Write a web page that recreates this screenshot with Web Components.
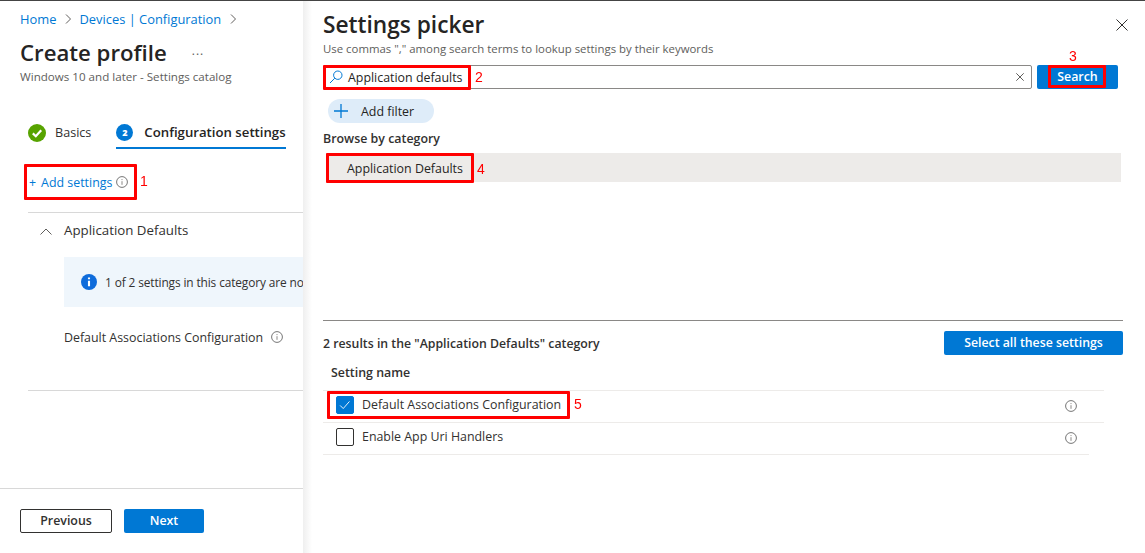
<!DOCTYPE html>
<html lang="en">
<head>
<meta charset="utf-8">
<title>Create profile</title>
<style>
  html, body { margin: 0; height: 100%; background: #fff; }
  body { font-family: "Open Sans", "Liberation Sans", sans-serif; font-size: 12.4px; color: #323130; overflow: hidden; }
</style>
</head>
<body>
<portal-page>
  <profile-pane slot="left"></profile-pane>
  <picker-pane slot="right"></picker-pane>
  <red-mark slot="marks" n="1" style="left:24px;top:164px;width:113px;height:36px" nx="140" ny="172"></red-mark>
  <red-mark slot="marks" n="2" style="left:323px;top:65px;width:148px;height:25px" nx="475" ny="68"></red-mark>
  <red-mark slot="marks" n="3" style="left:1048px;top:65px;width:58px;height:23px" nx="1069" ny="47"></red-mark>
  <red-mark slot="marks" n="4" style="left:326px;top:153px;width:148px;height:30px" nx="477" ny="160"></red-mark>
  <red-mark slot="marks" n="5" style="left:327px;top:391px;width:243px;height:28px" nx="574" ny="395"></red-mark>
</portal-page>

<script>
'use strict';

(function() {
  // small helper, every element below is the same boilerplate
  function define(name, html) {
    customElements.define(name, class extends HTMLElement {
      constructor() {
        super();
        const shadow = this.attachShadow({ mode: 'open' });
        shadow.innerHTML = typeof html === 'function' ? html(this) : html;
      }
    });
  }

  define('portal-page', `
    <style>
      :host { display: block; position: relative; width: 1145px; height: 553px; overflow: hidden; border-top: 1px solid #444; box-sizing: border-box; }
      .panes { display: flex; height: 100%; }
      .left { display: block; flex: 0 0 303px; min-width: 0; overflow: hidden; }
      .right { display: block; flex: 1; min-width: 0; }
    </style>
    <div class="panes">
      <slot name="left" class="left"></slot>
      <slot name="right" class="right"></slot>
    </div>
    <slot name="marks"></slot>
  `);

  // red annotation box with its number, lies over the screenshot
  define('red-mark', el => `
    <style>
      :host { display: block; position: absolute; box-sizing: border-box; border: 3px solid #f00; border-radius: 1px; margin-top: -1px; }
      span { position: fixed; color: #f00; font: 14px "Liberation Sans", sans-serif; line-height: 18px; }
    </style>
    <span style="left:${el.getAttribute('nx')}px;top:${el.getAttribute('ny')}px">${el.getAttribute('n')}</span>
  `);

  define('info-icon', `
    <style>
      :host { display: inline-flex; width: 12px; height: 12px; flex: none; }
      svg { width: 100%; height: 100%; }
    </style>
    <svg viewBox="0 0 12 12" fill="none" stroke="#757575" stroke-width="1">
      <circle cx="6" cy="6" r="5.4"/>
      <path d="M6 5.2v3.6M6 3.1v1" stroke="#8a8886"/>
    </svg>
  `);

  define('blue-button', `
    <style>
      :host { display: inline-flex; align-items: center; justify-content: center; box-sizing: border-box; height: 24px; padding-bottom: 2px; background: #0078d4; color: #fff; font-weight: 600; border-radius: 2px; }
    </style>
    <slot></slot>
  `);

  define('profile-pane', `
    <style>
      :host { display: flex; flex-direction: column; height: 552px; box-sizing: border-box; padding-top: 9px; position: relative; }
      a { color: #0078d4; text-decoration: none; }
      .crumbs { display: flex; align-items: center; height: 18px; margin-left: 20px; font-size: 12.9px; color: #0078d4; }
      .crumbs svg { width: 8px; height: 10px; margin: 0 7.5px; }
      .title { display: flex; align-items: center; margin: 10px 0 0 20px; height: 30px; }
      h1 { margin: 0; font-size: 22.2px; font-weight: 600; color: #252423; line-height: 30px; }
      .more { margin-left: 25px; color: #605e5c; font-size: 12px; letter-spacing: 1px; position: relative; top: -3px; }
      .sub { margin: 1px 0 0 20px; font-size: 11.6px; color: #605e5c; line-height: 16px; }
      .tabs { display: flex; margin: 32px 0 0 28px; height: 35px; }
      .tab { display: flex; align-items: center; gap: 9px; height: 31px; box-sizing: border-box; font-size: 12.6px; }
      .tab.on { margin-left: 25px; gap: 11px; font-size: 13.2px; font-weight: 600; color: #252423; border-bottom: 2px solid #0078d4; height: 32px; }
      .tab.on b { width: 17px; height: 17px; border-radius: 50%; background: #0078d4; color: #fff; font-size: 9px; display: flex; align-items: center; justify-content: center; }
      .tab svg { width: 18px; height: 18px; }
      .add { display: flex; align-items: center; gap: 4px; margin: 15px 0 0 29px; height: 30px; color: #0078d4; }
      .add a span { margin-left: 5px; }
      .group { margin: 15px 0 0 28px; border-top: 1px solid #d8d8d8; border-bottom: 1px solid #d8d8d8; height: 177px; }
      .head { display: flex; align-items: center; height: 34px; font-size: 13.3px; }
      .head svg { width: 12px; height: 7px; margin: 2px 12px 0 12px; }
      .notice { display: flex; align-items: center; gap: 8px; margin: 10px 0 0 36px; height: 50px; padding-left: 17px; background: #eff6fc; white-space: nowrap; overflow: hidden; }
      .notice svg { width: 16px; height: 16px; flex: none; }
      .notice span { font-size: 11.9px; letter-spacing: -.12px; }
      .setting { display: flex; align-items: center; gap: 8px; margin: 20px 0 0 36px; height: 20px; }
      .foot { position: relative; margin-top: auto; border-top: 1px solid #d8d8d8; height: 65px; display: flex; align-items: flex-start; gap: 12px; padding: 20px 0 0 20px; box-sizing: border-box; }
      .prev { display: inline-flex; align-items: center; justify-content: center; box-sizing: border-box; width: 92px; height: 24px; padding-bottom: 2px; border: 1px solid #323130; border-radius: 2px; font-weight: 600; }
      blue-button { width: 80px; }
    </style>
    <div class="crumbs">
      <a>Home</a>
      <svg viewBox="0 0 8 10" fill="none" stroke="#605e5c"><path d="M2 .5 6.5 5 2 9.5"/></svg>
      <a>Devices | Configuration</a>
      <svg viewBox="0 0 8 10" fill="none" stroke="#605e5c"><path d="M2 .5 6.5 5 2 9.5"/></svg>
    </div>
    <div class="title"><h1>Create profile</h1><span class="more">...</span></div>
    <div class="sub">Windows 10 and later - Settings catalog</div>
    <div class="tabs">
      <div class="tab">
        <svg viewBox="0 0 18 18"><circle cx="9" cy="9" r="9" fill="#57a300"/><path d="M4.8 9.4 7.8 12.2 13.2 6.2" fill="none" stroke="#fff" stroke-width="2.2"/></svg>
        <span>Basics</span>
      </div>
      <div class="tab on"><b>2</b><span>Configuration settings</span></div>
    </div>
    <div class="add"><a>+<span>Add settings</span></a><info-icon></info-icon></div>
    <div class="group">
      <div class="head">
        <svg viewBox="0 0 12 7" fill="none" stroke="#605e5c"><path d="M.5 6.5 6 1l5.5 5.5"/></svg>
        <span>Application Defaults</span>
      </div>
      <div class="notice">
        <svg viewBox="0 0 16 16"><circle cx="8" cy="8" r="8" fill="#0f6cdb"/><path d="M8 6.8v5.4M8 3.4v1.9" stroke="#fff" stroke-width="2.1" fill="none"/></svg>
        <span>1 of 2 settings in this category are not configured</span>
      </div>
      <div class="setting"><span>Default Associations Configuration</span><info-icon></info-icon></div>
    </div>
    <div class="foot">
      <span class="prev">Previous</span>
      <blue-button>Next</blue-button>
    </div>
  `);

  define('result-row', el => `
    <style>
      :host { display: flex; align-items: center; height: 32px; box-sizing: border-box; border-bottom: 1px solid #edebe9; padding: 0 0 3px 13px; }
      .box { width: 18px; height: 18px; box-sizing: border-box; border: 1px solid #323130; border-radius: 2px; flex: none; margin-right: 8px; display: flex; }
      :host([checked]) .box { background: #0078d4; border-color: #0078d4; }
      .box svg { width: 100%; height: 100%; }
      .name { flex: 1; margin-bottom: 2px; }
      info-icon { margin: 1px 12px 0 0; }
      :host([checked]) info-icon { margin-right: 27px; }
    </style>
    <span class="box">${el.hasAttribute('checked') ? '<svg viewBox="0 0 18 18" fill="none" stroke="#fff"><path d="M3.5 9.5 7 13 14 5"/></svg>' : ''}</span>
    <span class="name"><slot></slot></span>
    <info-icon></info-icon>
  `);

  define('picker-pane', `
    <style>
      :host { display: block; position: relative; height: 552px; background: linear-gradient(90deg, #efefef, #fff 9px); box-sizing: border-box; padding: 8px 22px 0 20px; }
      .close { position: absolute; right: 17px; top: 18px; width: 12px; height: 12px; }
      h1 { margin: 0; font-size: 22.7px; font-weight: 600; color: #252423; line-height: 32px; }
      .hint { font-size: 11.4px; color: #605e5c; line-height: 16px; }
      .search { display: flex; gap: 5px; margin-top: 8px; margin-right: 5px; }
      .field { flex: 1; display: flex; align-items: center; height: 24px; box-sizing: border-box; border: 1px solid #8a8886; border-radius: 2px; padding: 0 7px 0 5px; }
      .field .lens { width: 14px; height: 14px; margin-right: 5px; }
      .field span { flex: 1; color: #252423; }
      .field .x { width: 8px; height: 8px; }
      blue-button.go { width: 81px; }
      .filter { display: inline-flex; align-items: center; margin: 10px 0 0 5px; width: 106px; height: 24px; border-radius: 12px; background: #deecf9; box-sizing: border-box; padding-left: 6px; color: #252423; }
      .filter svg { width: 14px; height: 14px; margin-right: 13px; }
      .label { font-weight: 600; line-height: 18px; color: #323130; margin-top: 7px; }
      .cat { display: flex; align-items: center; height: 28px; padding-top: 1px; margin: 5px 2px 0 3px; background: #edebe9; padding-left: 21px; color: #252423; }
      .rule { border-top: 1px solid #8a8886; margin-top: 138px; }
      .count { display: flex; align-items: center; justify-content: space-between; margin-top: 10px; height: 24px; font-weight: 600; font-size: 12.3px; }
      blue-button.all { width: 179px; font-size: 12.3px; }
      .col { font-weight: 600; line-height: 18px; margin: 9px 0 0 8px; height: 26px; }
      .rows { border-top: 1px solid #edebe9; margin-right: 19px; }
      result-row + result-row { margin-right: 15px; }
    </style>
    <svg class="close" viewBox="0 0 12 12" fill="none" stroke="#323130"><path d="M.5.5l11 11M11.5.5l-11 11"/></svg>
    <h1>Settings picker</h1>
    <div class="hint">Use commas "," among search terms to lookup settings by their keywords</div>
    <div class="search">
      <div class="field">
        <svg class="lens" viewBox="0 0 14 14" fill="none" stroke="#0078d4"><circle cx="8.8" cy="5.2" r="4.2"/><path d="M5.8 8.2 1 13"/></svg>
        <span>Application defaults</span>
        <svg class="x" viewBox="0 0 8 8" fill="none" stroke="#605e5c"><path d="M.3.3l7.4 7.4M7.7.3.3 7.7"/></svg>
      </div>
      <blue-button class="go">Search</blue-button>
    </div>
    <div class="filter">
      <svg viewBox="0 0 14 14" fill="none" stroke="#0078d4" stroke-width="1.3"><path d="M7 0v14M0 7h14"/></svg>
      <span>Add filter</span>
    </div>
    <div class="label">Browse by category</div>
    <div class="cat">Application Defaults</div>
    <div class="rule"></div>
    <div class="count"><span>2 results in the "Application Defaults" category</span><blue-button class="all">Select all these settings</blue-button></div>
    <div class="col">Setting name</div>
    <div class="rows">
      <result-row checked>Default Associations Configuration</result-row>
      <result-row>Enable App Uri Handlers</result-row>
    </div>
  `);
})();
</script>
</body>
</html>
